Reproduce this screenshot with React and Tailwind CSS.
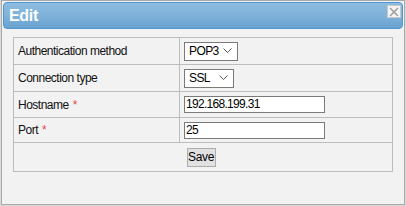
import React from "react";

const font = { fontFamily: '"Liberation Sans", Arial, sans-serif' };

function Select({ value, width }) {
  return (
    <div
      className={`flex items-center justify-between h-[19px] border border-[#7a7a7a] bg-white pl-[4px] pr-[5px] text-[12px] tracking-[-0.6px] text-black ${width}`}
    >
      <span>{value}</span>
      <svg width="9" height="6" viewBox="0 0 9 6">
        <path d="M0.5 0.5 L4.5 4.5 L8.5 0.5" fill="none" stroke="#555" strokeWidth="1" />
      </svg>
    </div>
  );
}

export default function App() {
  const rows = [
    { label: "Authentication method", h: "h-[26px]", field: <Select value="POP3" width="w-[54px]" /> },
    { label: "Connection type", h: "h-[26px]", field: <Select value="SSL" width="w-[50px]" /> },
    { label: "Hostname", req: true, h: "h-[25px]", value: "192.168.199.31" },
    { label: "Port", req: true, h: "h-[24px]", value: "25" },
  ];

  return (
    <div className="w-[406px] h-[206px] bg-[#d9d9d9] overflow-hidden" style={font}>
      <div className="ml-[1px] w-[404px] h-[205px] border border-[#a9a9a9] bg-[#f2f2f2] p-[1px]">
        {/* title bar */}
        <div className="relative h-[27px] rounded-[4px] border border-[#4f95d2] bg-gradient-to-b from-[#8dbcdf] via-[#7fb2da] to-[#68a2cf] flex items-center pl-[5px]">
          <span className="text-white font-bold text-[16px] tracking-[-0.3px] leading-none">Edit</span>
          <div className="absolute right-[1px] top-[2px] w-[14px] h-[13px] bg-[#f4f4f4] border border-[#c8c8c8] flex items-center justify-center">
            <svg width="10" height="10" viewBox="0 0 10 10">
              <path d="M1 1 L9 9 M9 1 L1 9" stroke="#a0a0a0" strokeWidth="1.6" />
            </svg>
          </div>
        </div>

        {/* form table */}
        <table className="ml-[10px] mt-[8px] w-[380px] border-collapse text-[12px] tracking-[-0.5px] text-[#111]">
          <tbody>
            {rows.map((r) => (
              <tr key={r.label}>
                <td className="w-[166px] border border-[#bdbdbd] p-0 align-middle">
                  <div className={`${r.h} flex items-center pl-[4px]`}>
                    {r.label}
                    {r.req && <span className="text-[#e8474b] ml-[4px]">*</span>}
                  </div>
                </td>
                <td className="border border-[#bdbdbd] p-0 align-middle">
                  <div className={`${r.h} flex items-center pl-[4px]`}>
                    {r.field || (
                      <div className="w-[141px] h-[17px] border border-[#7a7a7a] bg-white pl-[1px] text-[12px] tracking-[-0.7px] leading-[15px] text-black">
                        {r.value}
                      </div>
                    )}
                  </div>
                </td>
              </tr>
            ))}
            <tr>
              <td colSpan={2} className="border border-[#bdbdbd] p-0 align-middle">
                <div className="h-[28px] flex items-center justify-center">
                  <button className="ml-[-4px] h-[19px] w-[29px] border border-[#adadad] bg-[#e1e1e1] text-[12px] tracking-[-0.3px] text-black leading-none">
                    Save
                  </button>
                </div>
              </td>
            </tr>
          </tbody>
        </table>
      </div>
    </div>
  );
}
